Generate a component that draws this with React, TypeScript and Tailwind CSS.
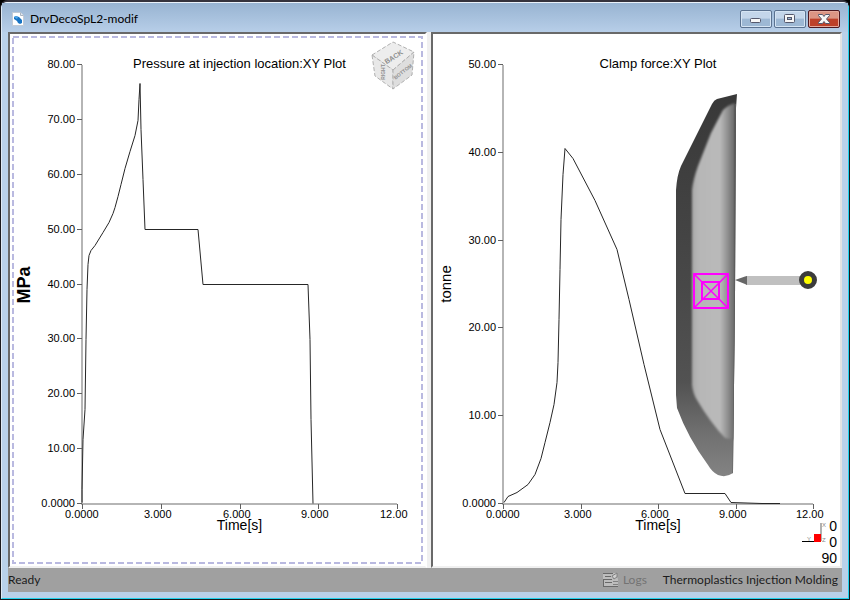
import type { ReactNode } from 'react'

type Point = [number, number]

type PlotProps = {
  title: string
  unit: string
  unitX: number
  unitY: number
  boldUnit?: boolean
  left: number
  right: number
  yLabels: string[]
  points: Point[]
  viewBox: string
  children?: ReactNode
}

const TOP = 65
const BOTTOM = 504
const X_LABELS = ['0.0000', '3.000', '6.000', '9.000', '12.00']

const PRESSURE: Point[] = [
  [82, 503], [82, 490], [83, 440], [85, 410], [86, 340], [87, 290], [88, 265], [89, 256], [91, 251],
  [95, 246], [103, 233], [109, 223], [113, 214], [115, 208], [118, 197], [121, 185], [125, 169],
  [130, 152], [135, 136], [138, 121], [139, 100], [140, 84], [141, 130], [143, 180], [145, 230],
  [198, 230], [203, 285], [308, 285], [310, 340], [311, 420], [313, 504],
]

const CLAMP: Point[] = [
  [504, 503], [508, 497], [517, 493], [528, 485], [535, 475], [541, 459], [545, 443], [550, 423],
  [554, 405], [557, 383], [558, 363], [559, 320], [560, 270], [561, 220], [563, 175], [565, 149],
  [573, 159], [595, 201], [617, 250], [629, 300], [644, 365], [660, 430], [685, 494], [725, 494],
  [731, 503], [762, 504], [780, 504],
]

export default function App() {
  return (
    <div className="flex h-screen flex-col overflow-hidden bg-black">
      <div className="flex min-h-0 flex-1 flex-col rounded-t-lg border border-t-2 border-[#1a1a1e] border-t-[#35333d] bg-[#b9d1ea]">
        <div className="flex min-h-0 flex-1 flex-col rounded-t-md border border-[#21d3ee] border-l-[#dfeaf5] border-t-[#eaf2fa]">
          <TitleBar />
          <main className="mx-1.5 grid min-h-0 flex-1 grid-cols-[minmax(0,419fr)_minmax(0,411fr)] grid-rows-[minmax(0,1fr)] gap-1 bg-[#f0f0f0]">
            <section className="border-2 border-[#696969] border-b-[#f0f0f0] border-r-white bg-white p-0.5">
              <Plot
                title="Pressure at injection location:XY Plot"
                unit="MPa"
                unitX={30}
                unitY={285}
                boldUnit
                left={82}
                right={397}
                yLabels={['80.00', '70.00', '60.00', '50.00', '40.00', '30.00', '20.00', '10.00', '0.0000']}
                points={PRESSURE}
                viewBox="12 36 411 528"
              >
                <rect x="13" y="37" width="409" height="526" fill="none" stroke="#b9b9e0" strokeWidth="2" strokeDasharray="6 3" />
                <ViewCube />
              </Plot>
            </section>
            <section className="border-2 border-[#696969] border-b-[#f0f0f0] border-r-[#e3e3e3] bg-white">
              <Plot
                title="Clamp force:XY Plot"
                unit="tonne"
                unitX={451}
                unitY={284}
                left={503}
                right={813}
                yLabels={['50.00', '40.00', '30.00', '20.00', '10.00', '0.0000']}
                points={CLAMP}
                viewBox="433 34 407 532"
              >
                <Part />
                <Nozzle />
                <Triad />
              </Plot>
            </section>
          </main>
          <StatusBar />
        </div>
      </div>
    </div>
  )
}

function TitleBar() {
  return (
    <header className="flex h-[29px] shrink-0 items-center bg-linear-to-b from-[#98b4d2] to-[#b7cee8] px-2 pt-0.5">
      <svg width="16" height="16" viewBox="0 0 16 16" aria-hidden>
        <path d="M2.5 1.5h8l3 3v10h-11z" fill="#fff" stroke="#c3cbd5" />
        <path d="M10.5 1.5v3h3" fill="#e5eaf0" stroke="#aab4c0" />
        <path d="M4 6l2-1 3 1 3 3v3l-2 1-2-1-1-2-3-2z" fill="#1874c4" />
        <path d="M4 6l2-1 2 1-1 2z" fill="#52a8e8" />
      </svg>
      <h1 className="ml-1 flex-1 truncate font-[Lato,'Open_Sans',sans-serif] text-[12px] leading-4 text-black">
        DrvDecoSpL2-modif
      </h1>
      <div className="flex gap-0.5">
        <button
          aria-label="Minimize"
          className="flex h-[18px] w-8 items-center justify-center rounded-xs border border-[#5b7290] bg-linear-to-b from-[#c4d6ea] from-45% to-[#9db8d4] to-50% shadow-[inset_0_0_0_1px_#d5e4f3]"
        >
          <svg width="12" height="12" viewBox="0 0 12 12">
            <rect x="0.5" y="5.5" width="10" height="4" rx="1" fill="#f7f7f7" stroke="#55586c" />
          </svg>
        </button>
        <button
          aria-label="Maximize"
          className="flex h-[18px] w-8 items-center justify-center rounded-xs border border-[#5b7290] bg-linear-to-b from-[#c4d6ea] from-45% to-[#9db8d4] to-50% shadow-[inset_0_0_0_1px_#d5e4f3]"
        >
          <svg width="12" height="12" viewBox="0 0 12 12">
            <rect x="0.5" y="1.5" width="10" height="8" rx="1" fill="#f7f7f7" stroke="#55586c" />
            <rect x="3.5" y="4.5" width="4" height="2" fill="#9db8d4" stroke="#55586c" />
          </svg>
        </button>
        <button
          aria-label="Close"
          className="flex h-[18px] w-8 items-center justify-center rounded-xs border border-[#4d1820] bg-linear-to-b from-[#dc9584] from-45% to-[#bd4029] to-50% shadow-[inset_0_0_0_1px_#e4a99c]"
        >
          <svg width="14" height="12" viewBox="0 0 14 12">
            <path
              d="M1.5 1.5h4L7 3.5l1.5-2h4v1L9.5 6l3 3.5v1h-4L7 8.5l-1.5 2h-4v-1L4.500 6l-3-3.500z"
              fill="#f7f7f7"
              stroke="#55586c"
            />
          </svg>
        </button>
      </div>
    </header>
  )
}

function StatusBar() {
  return (
    <footer className="mx-1.5 mb-1.5 flex h-6 shrink-0 items-center bg-[#a0a0a0] pr-1 font-[Lato,'Open_Sans',sans-serif] text-[12px] leading-4 text-[#1c1c1c]">
      <span className="flex-1">Ready</span>
      <button disabled className="mr-4 flex items-center gap-1 text-[#737373]">
        <svg width="16" height="16" viewBox="0 0 16 16" aria-hidden>
          <path d="M0 1h14v4l1 2v8H0z" fill="#bdbdbd" />
          <path d="M0 1.5h10M2 4.5h6M0 7.5h9M2 10.5h7M0 14.5h15M0.5 8v6" stroke="#696969" />
          <path d="M9 4l5-3v4l-3 2zM10 9.5h5M10 12.5h5" fill="#cfcfcf" stroke="#808080" />
        </svg>
        Logs
      </button>
      <span>Thermoplastics Injection Molding</span>
    </footer>
  )
}

function Plot({ title, unit, unitX, unitY, boldUnit, left, right, yLabels, points, viewBox, children }: PlotProps) {
  const middle = (left + right) / 2
  const yStep = (BOTTOM - TOP) / (yLabels.length - 1)
  const xStep = (right - left) / (X_LABELS.length - 1)

  return (
    <svg
      className="block h-full w-full font-['Liberation_Sans',Arial,sans-serif]"
      viewBox={viewBox}
      role="img"
      aria-label={title}
    >
      <path d={`M${left} ${TOP}V${BOTTOM}H${right}`} fill="none" stroke="#b5b5b5" strokeWidth="2" />
      <g className="text-[11px]">
        {yLabels.map((label, i) => {
          const y = Math.round(TOP + i * yStep)
          return (
            <g key={label}>
              <path d={`M${left - 5} ${y - 0.5}h5`} stroke="#606060" />
              <text x={left - 7} y={y + 3} textAnchor="end">{label}</text>
            </g>
          )
        })}
        {X_LABELS.map((label, i) => {
          const x = Math.round(left + i * xStep)
          return (
            <g key={label}>
              <path d={`M${x + 0.5} ${BOTTOM}v5`} stroke="#606060" />
              <text x={x - 17} y={BOTTOM + 14}>{label}</text>
            </g>
          )
        })}
      </g>
      <text x={middle} y={68} textAnchor="middle" className="text-[13px]">{title}</text>
      <text x={middle} y={530} textAnchor="middle" className="text-[14px]">Time[s]</text>
      <text
        textAnchor="middle"
        transform={`translate(${unitX} ${unitY}) rotate(-90)`}
        className={boldUnit ? 'text-[18px] font-bold' : 'text-[15px]'}
      >
        {unit}
      </text>
      <polyline
        points={points.map(([x, y]) => `${x},${y - 0.5}`).join(' ')}
        fill="none"
        stroke="#262626"
        strokeWidth="1"
      />
      {children}
    </svg>
  )
}

function ViewCube() {
  return (
    <g stroke="#b0b0b0" strokeDasharray="4 2">
      <path d="M372 55L393 42L414 52L393 70Z" fill="#ededed" />
      <path d="M372 55L393 70V89L375 76Z" fill="#e8e8e8" />
      <path d="M393 70L414 52L412 75L393 89Z" fill="#dedede" />
      <g fill="#8f8f8f" stroke="none" fontWeight="bold" textAnchor="middle">
        <text transform="translate(395 59) rotate(-32)" className="text-[7px]">BACK</text>
        <text transform="translate(385 72) rotate(-90)" className="text-[5px]">RIGHT</text>
        <text transform="translate(404 73) rotate(-38)" className="text-[5px]">BOTTOM</text>
      </g>
    </g>
  )
}

// molded part seen from the side, with the injection marker on top
function Part() {
  return (
    <g>
      <defs>
        <linearGradient id="shell" x1="0" y1="0" x2="0" y2="1">
          <stop offset="0" stopColor="#383838" />
          <stop offset="0.5" stopColor="#484848" />
          <stop offset="0.75" stopColor="#525252" />
          <stop offset="0.88" stopColor="#707070" />
          <stop offset="1" stopColor="#858585" />
        </linearGradient>
        <linearGradient id="face" x1="0" y1="0" x2="1" y2="0">
          <stop offset="0" stopColor="#a8a8a8" />
          <stop offset="0.15" stopColor="#b6b6b6" />
          <stop offset="0.65" stopColor="#bababa" />
          <stop offset="0.82" stopColor="#929292" />
          <stop offset="1" stopColor="#666" />
        </linearGradient>
        <filter id="soften" x="-10%" y="-10%" width="120%" height="120%">
          <feGaussianBlur stdDeviation="1" />
        </filter>
        <clipPath id="outline">
          <path d="M737 94L736 108L735 300L733 473Q726 478 718 475Q712 472 708 465Q688 438 677 408L676 395V190Q677 175 681 166L712 104Q714 100 717 99Z" />
        </clipPath>
      </defs>
      <g clipPath="url(#outline)">
        <path d="M670 90H740V480H670Z" fill="url(#shell)" />
        <path d="M735 103Q728 105 723 110L711 133L698 166Q693 180 692 190V385Q693 394 697 400Q710 422 725 438L735 440Z" fill="url(#face)" filter="url(#soften)" />
        <path d="M735.5 104L735 300L733 474" fill="none" stroke="#5a5a5a" />
      </g>
      <g fill="none" stroke="#f0f" strokeWidth="2">
        <rect x="694" y="274" width="34" height="34" />
        <rect x="702" y="282" width="17" height="17" />
        <path d="M694 274L728 308M728 274L694 308" strokeWidth="1.5" />
      </g>
    </g>
  )
}

function Nozzle() {
  return (
    <g>
      <path d="M746 276H802V285H746Z" fill="#c0c0c0" />
      <path d="M735 280L745 276.5L747 276V285L745 284Z" fill="#666" />
      <circle cx="808" cy="280" r="6.5" fill="#ff0" stroke="#3c3c3c" strokeWidth="5" />
    </g>
  )
}

function Triad() {
  return (
    <g>
      <path d="M821 523V541" stroke="#b0b0b0" strokeWidth="2" />
      <path d="M802 541.5H821" stroke="#000" />
      <rect x="814" y="534" width="7" height="8" fill="#f00" />
      <g fill="#888" className="text-[6px]">
        <text x="822" y="527">X</text>
        <text x="807" y="541">Y</text>
        <text x="822" y="542">Z</text>
      </g>
      <g textAnchor="end" className="text-[14px]">
        <text x="837" y="531">0</text>
        <text x="837" y="547">0</text>
        <text x="837" y="563">90</text>
      </g>
    </g>
  )
}
